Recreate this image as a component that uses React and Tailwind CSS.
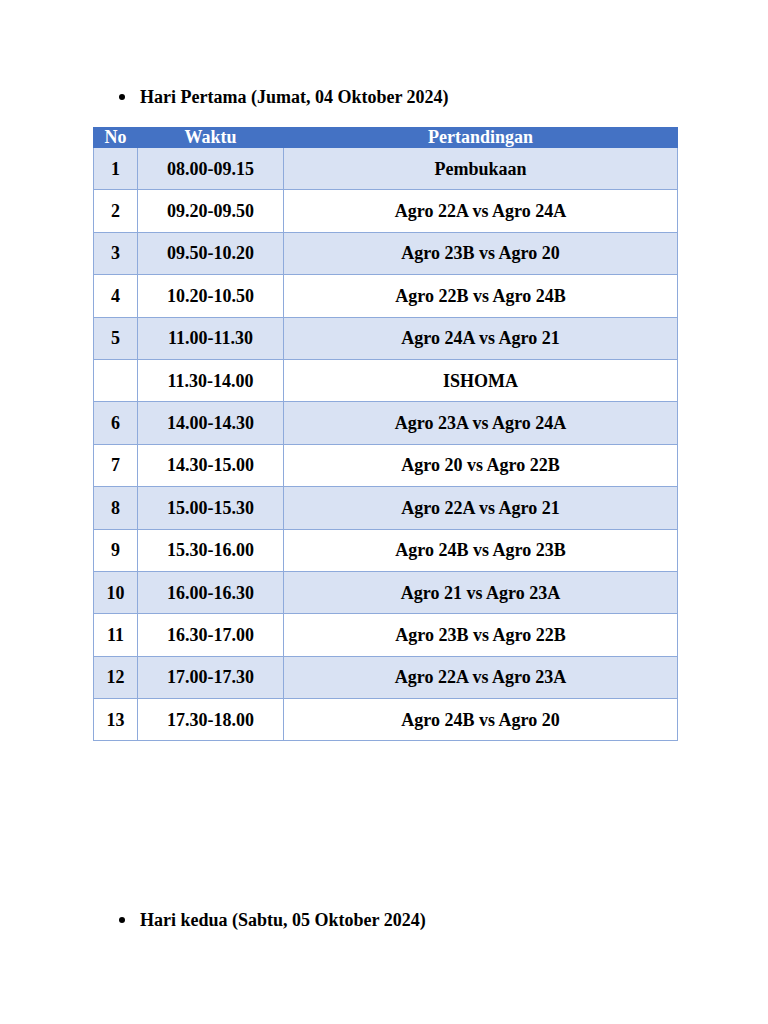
import React from 'react';

const rows = [
  ['1', '08.00-09.15', 'Pembukaan'],
  ['2', '09.20-09.50', 'Agro 22A vs Agro 24A'],
  ['3', '09.50-10.20', 'Agro 23B vs Agro 20'],
  ['4', '10.20-10.50', 'Agro 22B vs Agro 24B'],
  ['5', '11.00-11.30', 'Agro 24A vs Agro 21'],
  ['', '11.30-14.00', 'ISHOMA'],
  ['6', '14.00-14.30', 'Agro 23A vs Agro 24A'],
  ['7', '14.30-15.00', 'Agro 20 vs Agro 22B'],
  ['8', '15.00-15.30', 'Agro 22A vs Agro 21'],
  ['9', '15.30-16.00', 'Agro 24B vs Agro 23B'],
  ['10', '16.00-16.30', 'Agro 21 vs Agro 23A'],
  ['11', '16.30-17.00', 'Agro 23B vs Agro 22B'],
  ['12', '17.00-17.30', 'Agro 22A vs Agro 23A'],
  ['13', '17.30-18.00', 'Agro 24B vs Agro 20'],
];

const Heading = ({ children }) => (
  <div className="flex items-center h-[24px]">
    <span className="w-[47px] flex justify-end pr-[15px]">
      <span className="block w-[6px] h-[6px] rounded-full bg-black" />
    </span>
    <span className="text-[18px] font-bold text-black">{children}</span>
  </div>
);

export default function App() {
  return (
    <div
      className="w-[768px] h-[1024px] bg-white overflow-hidden"
      style={{ fontFamily: '"Liberation Serif", "Times New Roman", serif' }}
    >
      <div className="pl-[93px] pt-[85px]">
        <Heading>Hari Pertama (Jumat, 04 Oktober 2024)</Heading>

        <table className="mt-[18px] w-[585px] border-collapse text-[18px] font-bold text-black">
          <thead>
            <tr className="bg-[#4472C4] text-white h-[19px]">
              <th className="w-[44px] p-0 leading-[19px] border border-[#4472C4]">No</th>
              <th className="w-[146px] p-0 leading-[19px] border border-[#4472C4]">Waktu</th>
              <th className="p-0 leading-[19px] border border-[#4472C4]">Pertandingan</th>
            </tr>
          </thead>
          <tbody>
            {rows.map((r, i) => (
              <tr key={i} className={i % 2 === 0 ? 'bg-[#D9E2F3] h-[42.4px]' : 'bg-white h-[42.4px]'}>
                <td className="p-0 pt-[1px] text-center border border-[#8EAADB]">{r[0]}</td>
                <td className="p-0 pt-[1px] text-center border border-[#8EAADB]">{r[1]}</td>
                <td className="p-0 pt-[1px] text-center border border-[#8EAADB]">{r[2]}</td>
              </tr>
            ))}
          </tbody>
        </table>

        <div className="mt-[167px]">
          <Heading>Hari kedua (Sabtu, 05 Oktober 2024)</Heading>
        </div>
      </div>
    </div>
  );
}
